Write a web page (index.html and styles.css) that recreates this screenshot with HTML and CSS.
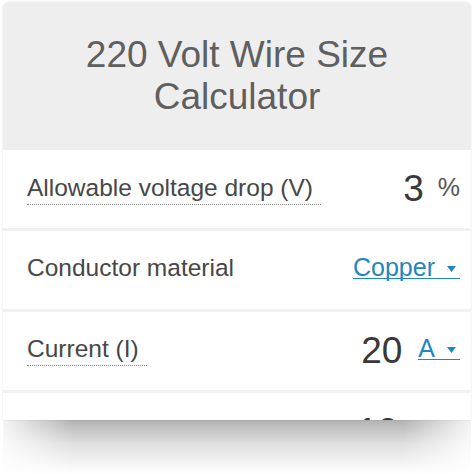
FILE: index.html
```html
<!DOCTYPE html>
<html lang="en">
<head>
  <meta charset="UTF-8" />
  <meta name="viewport" content="width=device-width, initial-scale=1.0"/>
  <title>220 Volt Wire Size Calculator</title>
  <link rel="stylesheet" href="styles.css">
</head>
<body>
  <div class="calc">
    <h1 class="calc-title">220 Volt Wire Size Calculator</h1>

    <div class="field">
      <span class="label">Allowable voltage drop (V)</span>
      <span class="value">3</span>
      <span class="unit">%</span>
    </div>

    <div class="field">
      <span class="label plain">Conductor material</span>
      <a class="select" href="#">Copper<svg class="caret" width="9" height="6" viewBox="0 0 9 6"><path d="M0 0h9L4.5 6z"/></svg></a>
    </div>

    <div class="field">
      <span class="label">Current (I)</span>
      <span class="value">20</span>
      <a class="select unit-select" href="#">A<svg class="caret" width="9" height="6" viewBox="0 0 9 6"><path d="M0 0h9L4.5 6z"/></svg></a>
    </div>

    <div class="field">
      <span class="label">Cable length (L)</span>
      <span class="value">10</span>
      <a class="select unit-select" href="#">m<svg class="caret" width="9" height="6" viewBox="0 0 9 6"><path d="M0 0h9L4.5 6z"/></svg></a>
    </div>
  </div>
  <div class="calc-fade"></div>
</body>
</html>
```

FILE: styles.css
```css
body {
  font-family: "Liberation Sans", Arial, sans-serif;
  background: #fff;
  margin: 0;
  padding: 2px 3px 0;
}
.calc {
  height: 418px;
  overflow: hidden;
  background: #f1f1f1;
  border-radius: 6px 6px 0 0;
  box-shadow: 0 0 2px rgba(0,0,0,0.14);
  display: flex;
  flex-direction: column;
  gap: 3px;
}
.calc-title {
  margin: 0;
  padding: 32px 20px;
  background: #eee;
  color: #5f5f5f;
  font-size: 37px;
  font-weight: normal;
  line-height: 42px;
  text-align: center;
  margin-bottom: -3px;
}
.field {
  flex: none;
  box-sizing: border-box;
  height: 78px;
  padding: 23px 11px 23px 24px;
  background: #fff;
  display: flex;
  align-items: baseline;
}
.label {
  margin-right: auto;
  font-size: 24.5px;
  line-height: 28px;
  color: #474747;
  padding: 0 8px 2px 0;
  border-bottom: 1px dotted #8a8a8a;
}
.label.plain {
  border-bottom-color: transparent;
}
.value {
  align-self: center;
  font-size: 37px;
  line-height: 40px;
  color: #383838;
}
.unit {
  margin-left: 14px;
  font-size: 25px;
  line-height: 28px;
  color: #555;
}
.select {
  display: inline-block;
  font-size: 25px;
  line-height: 22px;
  color: #1f86bf;
  text-decoration: none;
  border-bottom: 1.5px solid #1f86bf;
  padding-right: 4px;
}
.unit-select {
  margin-left: 16px;
}
.caret {
  fill: #1f86bf;
  margin-left: 12px;
  vertical-align: 4px;
}
.calc-fade {
  height: 54px;
  background: linear-gradient(rgba(0,0,0,0.3), rgba(0,0,0,0.12) 45%, rgba(0,0,0,0));
  -webkit-mask-image: linear-gradient(90deg, rgba(0,0,0,0.15), #000 70px, #000 400px, rgba(0,0,0,0.15));
  mask-image: linear-gradient(90deg, rgba(0,0,0,0.15), #000 70px, #000 400px, rgba(0,0,0,0.15));
}
```
